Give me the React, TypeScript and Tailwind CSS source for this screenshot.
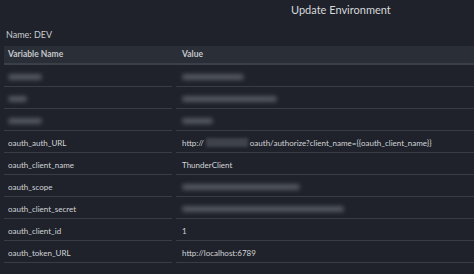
import type { ReactNode } from 'react'

type Row = {
  name: ReactNode
  value: ReactNode
}

function Smear({ w }: { w: number }) {
  return <span className="inline-block h-[6px] rounded-full bg-[#52565e] blur-[2px] align-middle" style={{ width: w }} />
}

const rows: Row[] = [
  { name: <Smear w={34} />, value: <Smear w={62} /> },
  { name: <Smear w={19} />, value: <Smear w={95} /> },
  { name: <Smear w={34} />, value: <Smear w={31} /> },
  {
    name: 'oauth_auth_URL',
    value: (
      <span className="flex items-center">
        http://
        <span className="mx-[2px] inline-block h-[9px] w-[42px] bg-[#3e424a] blur-[1.5px]" />
        oauth/authorize?client_name={'{{oauth_client_name}}'}
      </span>
    ),
  },
  { name: 'oauth_client_name', value: 'ThunderClient' },
  { name: 'oauth_scope', value: <Smear w={118} /> },
  { name: 'oauth_client_secret', value: <Smear w={162} /> },
  { name: 'oauth_client_id', value: '1' },
  { name: 'oauth_token_URL', value: 'http://localhost:6789' },
]

export default function App() {
  return (
    <div className="h-[274px] w-[474px] overflow-hidden whitespace-nowrap bg-[#1f222a] text-[#d2d5d9]" style={{ fontFamily: 'Lato, "Noto Sans", sans-serif' }}>
      <div className="flex h-[21px] items-center pl-[291px] text-[11px] text-[#d6d8dc]">Update Environment</div>
      <div className="flex h-[25px] items-center pl-[6px] pt-[2px] text-[9px] text-[#c9ccd0]">Name: DEV</div>

      <div className="ml-[4px]">
        <div className="grid h-[19px] grid-cols-[172px_1fr] items-center border-b-2 border-[#3b3f47] bg-[#2a2e36] text-[8.5px] font-bold text-[#c3c6cb]">
          <div className="pl-[4px]">Variable Name</div>
          <div className="pl-[6px]">Value</div>
        </div>

        {rows.map((r, i) => (
          <div key={i} className="grid h-[22px] grid-cols-[168px_1fr] gap-[4px] text-[8px]">
            <div className="flex items-center border-b border-[#383c44] pl-[4px] pt-[2px]">{r.name}</div>
            <div className="flex items-center border-b border-[#383c44] pl-[6px] pt-[2px]">{r.value}</div>
          </div>
        ))}
      </div>
    </div>
  )
}
